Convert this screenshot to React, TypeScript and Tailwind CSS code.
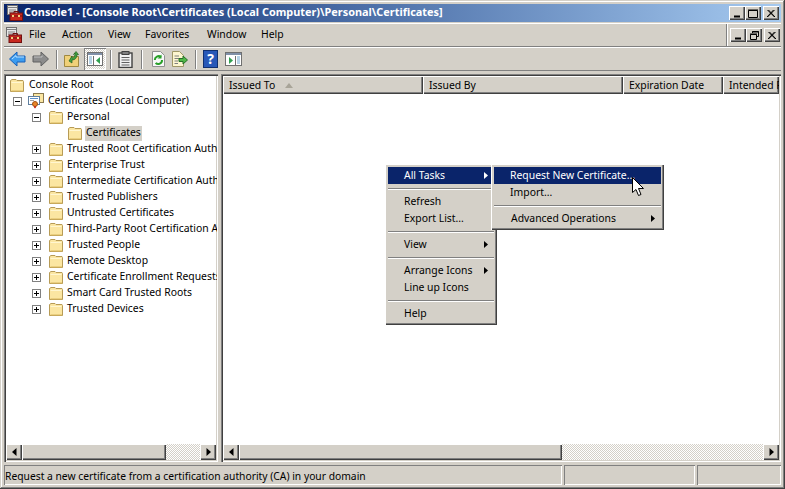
import React from 'react';

const font = { fontFamily: '"Noto Sans", Tahoma, sans-serif' };

const raised = 'shadow-[inset_1px_1px_0_#ffffff,inset_-1px_-1px_0_#404040,inset_-2px_-2px_0_#808080]';
const treeItems = [
  'Trusted Root Certification Authorities',
  'Enterprise Trust',
  'Intermediate Certification Authorities',
  'Trusted Publishers',
  'Untrusted Certificates',
  'Third-Party Root Certification Authorities',
  'Trusted People',
  'Remote Desktop',
  'Certificate Enrollment Requests',
  'Smart Card Trusted Roots',
  'Trusted Devices',
];

const menus = [
  { label: 'File', width: 'w-[33px]' },
  { label: 'Action', width: 'w-[46px]' },
  { label: 'View', width: 'w-[37px]' },
  { label: 'Favorites', width: 'w-[62px]' },
  { label: 'Window', width: 'w-[54px]' },
  { label: 'Help', width: 'w-[30px]' },
];

const Folder = ({ className = '' }: { className?: string }) => (
  <svg width="16" height="15" viewBox="0 0 16 15" className={`shrink-0 ${className}`}>
    <path d="M1.5 13.5V2.5L3 1.5H7L8 2.5H14L14.5 3.5V13.5Z" fill="#fbe6a2" stroke="#b79b56" />
    <path d="M2.5 4.5H13.5" stroke="#fff6d0" />
    <path d="M2.5 13H14" stroke="#d9b85f" />
  </svg>
);

const Expander = ({ open }: { open: boolean }) => (
  <svg width="9" height="9" viewBox="0 0 9 9" className="shrink-0">
    <rect x="0.5" y="0.5" width="8" height="8" fill="#fff" stroke="#808080" />
    <path d={open ? 'M2 4.5H7' : 'M2 4.5H7M4.5 2V7'} stroke="#000" />
  </svg>
);

const MmcIcon = () => (
  <svg width="16" height="16" viewBox="0 0 16 16" className="shrink-0">
    <rect x="0.5" y="0.5" width="10" height="9" fill="#e8e8e8" stroke="#707070" />
    <path d="M1 2.5H10M2 5H9M2 7H9" stroke="#808080" />
    <rect x="3" y="8" width="12.5" height="7.5" fill="#c8281e" stroke="#701010" />
    <path d="M3 11H15.5" stroke="#701010" />
    <rect x="5" y="10" width="2" height="2" fill="#f0d080" />
    <rect x="11" y="10" width="2" height="2" fill="#f0d080" />
    <path d="M7 8V6.5H11.5V8" fill="none" stroke="#701010" />
  </svg>
);

const CertIcon = () => (
  <svg width="16" height="16" viewBox="0 0 16 16" className="shrink-0">
    <rect x="5.5" y="0.5" width="10" height="9" fill="#fbe6a2" stroke="#8a7a50" />
    <rect x="0.5" y="3.5" width="11" height="8" fill="#fff" stroke="#5f7f9f" />
    <path d="M2 5.5H10" stroke="#5a8fc8" />
    <path d="M2 7.5H6" stroke="#a0a0a0" />
    <circle cx="7" cy="11" r="2.5" fill="#e8862a" stroke="#a05010" />
    <path d="M6 13V15.5L7 14.5L8 15.5V13" fill="#c03020" />
  </svg>
);

const Arrow = ({ dir, gray }: { dir: 'left' | 'right'; gray?: boolean }) => (
  <svg width="17" height="16" viewBox="0 0 17 16" className="shrink-0">
    <path
      d={dir === 'left' ? 'M0.5 8L8 1V5H16V11H8V15Z' : 'M16.5 8L9 1V5H1V11H9V15Z'}
      fill={gray ? '#8c8c8c' : '#3c9cf0'}
      stroke={gray ? '#606060' : '#1860b8'}
    />
    <path
      d={dir === 'left' ? 'M3 8L7 4.5V6H15' : 'M2 6H10V4.5'}
      fill="none"
      stroke={gray ? '#c0c0c0' : '#b8e0ff'}
    />
  </svg>
);

const Sep = () => <div className="w-[2px] h-[19px] border-l border-[#808080] bg-white shrink-0" />;

const ScrollButton = ({ dir }: { dir: 'left' | 'right' }) => (
  <div className={`w-4 h-[16px] bg-[#d4d0c8] ${raised} flex items-center justify-center shrink-0`}>
    <svg width="5" height="8" viewBox="0 0 5 8">
      <path d={dir === 'left' ? 'M4.5 0V8L0 4Z' : 'M0.5 0V8L5 4Z'} fill="#000" />
    </svg>
  </div>
);

const Scrollbar = ({ thumb }: { thumb: string }) => (
  <div className="h-[16px] flex shrink-0 bg-[repeating-conic-gradient(#d4d0c8_0_25%,#ffffff_0_50%)] bg-[length:2px_2px]">
    <ScrollButton dir="left" />
    <div className={`${thumb} h-[16px] bg-[#d4d0c8] ${raised}`} />
    <div className="flex-1" />
    <ScrollButton dir="right" />
  </div>
);

const WinButton = ({ children, className = '' }: { children: React.ReactNode; className?: string }) => (
  <div className={`w-4 h-[14px] bg-[#d4d0c8] ${raised} flex items-center justify-center ${className}`}>
    {children}
  </div>
);

const MinGlyph = () => (
  <svg width="8" height="9" viewBox="0 0 8 9"><path d="M1 7.5H7" stroke="#000" strokeWidth="2" /></svg>
);
const MaxGlyph = () => (
  <svg width="10" height="9" viewBox="0 0 10 9"><path d="M0.5 1.5H9.5V8.5H0.5Z" fill="none" stroke="#000" /><path d="M0 1H10" stroke="#000" /></svg>
);
const RestoreGlyph = () => (
  <svg width="9" height="9" viewBox="0 0 9 9">
    <path d="M2.5 2V0.5H8.5V5.5H7" fill="none" stroke="#000" />
    <path d="M0.5 3.5H6.5V8.5H0.5Z" fill="none" stroke="#000" />
    <path d="M2 1H9M0 3H7" stroke="#000" />
  </svg>
);
const CloseGlyph = () => (
  <svg width="8" height="7" viewBox="0 0 8 7"><path d="M0.5 0L7.5 7M7.5 0L0.5 7M1.5 0L8 7M6.5 0L0 7" stroke="#000" /></svg>
);

const MenuRow = ({ label, arrow, active, pad }: { label: string; arrow?: boolean; active?: boolean; pad: string }) => (
  <div className={`h-[17px] flex items-center justify-between ${pad} pr-[6px] ${active ? 'bg-[#0a246a] text-white' : 'text-black'}`}>
    <span className="whitespace-nowrap leading-none">{label}</span>
    {arrow && (
      <svg width="4" height="7" viewBox="0 0 4 7">
        <path d="M0 0L4 3.5L0 7Z" fill={active ? '#fff' : '#000'} />
      </svg>
    )}
  </div>
);

const MenuSep = () => (
  <div className="h-[9px] flex flex-col justify-center">
    <div className="h-[2px] border-t border-[#808080] bg-white" />
  </div>
);

const mainMenu = [
  ['All Tasks', 'arrow', 'active'],
  null,
  ['Refresh'],
  ['Export List...'],
  null,
  ['View', 'arrow'],
  null,
  ['Arrange Icons', 'arrow'],
  ['Line up Icons'],
  null,
  ['Help'],
];

const columns = [
  { label: 'Issued To', width: 'w-[200px]', sort: true },
  { label: 'Issued By', width: 'w-[200px]' },
  { label: 'Expiration Date', width: 'w-[100px]' },
  { label: 'Intended Purposes', width: 'flex-1' },
];

export default function App() {
  return (
    <div
      style={font}
      className="relative w-[785px] h-[489px] overflow-hidden bg-[#d4d0c8] text-[10.4px] text-black p-[4px] shadow-[inset_-1px_-1px_0_#404040,inset_1px_1px_0_#d4d0c8,inset_-2px_-2px_0_#808080,inset_2px_2px_0_#ffffff] flex flex-col"
    >
      {/* Title bar */}
      <div className="h-[18px] flex items-center pl-[3px] pr-[2px] bg-gradient-to-r from-[#0a246a] to-[#a6caf0] shrink-0">
        <MmcIcon />
        <span className="ml-[1px] text-white font-bold text-[10.9px] whitespace-nowrap flex-1 leading-none pb-[1px]">
          Console1 - [Console Root\Certificates (Local Computer)\Personal\Certificates]
        </span>
        <WinButton><MinGlyph /></WinButton>
        <WinButton><MaxGlyph /></WinButton>
        <WinButton className="ml-[2px]"><CloseGlyph /></WinButton>
      </div>

      {/* Menu bar */}
      <div className="mt-[1px] h-[24px] flex items-center border-t border-white border-b border-b-[#808080] shrink-0">
        <div className="ml-[2px]"><MmcIcon /></div>
        <div className="flex ml-[7px] pb-[2px]">
          {menus.map((m) => (
            <span key={m.label} className={`${m.width} leading-none`}>{m.label}</span>
          ))}
        </div>
        <div className="flex-1" />
        <div className="h-[22px] border-l border-[#808080] w-[2px] bg-white" />
        <div className="flex items-center ml-[2px] mr-[1px]">
          <WinButton><MinGlyph /></WinButton>
          <WinButton><RestoreGlyph /></WinButton>
          <WinButton className="ml-[2px]"><CloseGlyph /></WinButton>
        </div>
      </div>

      {/* Toolbar */}
      <div className="h-[24px] flex items-center border-t border-white border-b border-b-[#808080] shrink-0 pl-[5px]">
        <Arrow dir="left" />
        <div className="ml-[6px]"><Arrow dir="right" gray /></div>
        <div className="ml-[7px]"><Sep /></div>
        <svg width="16" height="16" viewBox="0 0 16 16" className="ml-[6px] shrink-0">
          <path d="M0.5 15.5V4.5H6L7 5.5H14.5V15.5Z" fill="#f0d078" stroke="#a08840" />
          <path d="M5 10L8 5V7C10 7 11 5 11 2L9.5 3.5L12 0.5L14.5 3.5H13C13 7 11 9 8 9V12Z" fill="#40a040" stroke="#206020" strokeWidth="0.7" />
        </svg>
        <div className="ml-[4px] w-[22px] h-[22px] bg-[repeating-conic-gradient(#d4d0c8_0_25%,#ffffff_0_50%)] bg-[length:2px_2px] shadow-[inset_1px_1px_0_#808080,inset_-1px_-1px_0_#ffffff] flex items-center justify-center shrink-0">
          <svg width="16" height="14" viewBox="0 0 16 14">
            <rect x="0.5" y="0.5" width="15" height="13" fill="#fff" stroke="#707070" />
            <path d="M1 2H15" stroke="#8090a8" strokeWidth="2" />
            <path d="M6.5 4V13" stroke="#707070" />
            <path d="M2 5H5M2 7H5M2 9H5M2 11H5" stroke="#70a8d0" />
            <path d="M13 5V12L9 8.5Z" fill="#30a050" />
          </svg>
        </div>
        <div className="ml-[4px]"><Sep /></div>
        <svg width="15" height="17" viewBox="0 0 15 17" className="ml-[6px] shrink-0">
          <rect x="1" y="2" width="13" height="14.5" fill="#f0f0f0" stroke="#404040" strokeWidth="1.4" />
          <rect x="4" y="0.5" width="7" height="3" fill="#808080" stroke="#404040" />
          <path d="M3.5 6.5H11.5M3.5 9H11.5M3.5 11.5H11.5M3.5 14H11.5" stroke="#606060" />
        </svg>
        <div className="ml-[8px]"><Sep /></div>
        <svg width="16" height="16" viewBox="0 0 16 16" className="ml-[7px] shrink-0">
          <path d="M2.5 0.5H10.5L14.5 4.5V15.5H2.5Z" fill="#f8f8f8" stroke="#909090" />
          <path d="M4.8 9A3.8 3.8 0 0 1 11 6M12 9A3.8 3.8 0 0 1 5.6 12" fill="none" stroke="#28a028" strokeWidth="2" />
          <path d="M11.5 3.5V7.5H7.5Z" fill="#28a028" />
        </svg>
        <svg width="17" height="16" viewBox="0 0 17 16" className="ml-[5px] shrink-0">
          <path d="M1.5 0.5H8.5L12.5 4.5V15.5H1.5Z" fill="#fdf6d0" stroke="#a09868" />
          <path d="M3.5 5H8M3.5 7.5H8M3.5 10H7M3.5 12.5H7" stroke="#808080" />
          <path d="M8 7.5H12V5L16.5 9L12 13V10.5H8Z" fill="#50b848" stroke="#287028" />
        </svg>
        <div className="ml-[7px]"><Sep /></div>
        <svg width="15" height="18" viewBox="0 0 15 18" className="ml-[6px] shrink-0">
          <rect x="0.5" y="0.5" width="14" height="17" fill="#2858b8" stroke="#103070" />
          <text x="7.5" y="14" fontSize="14" fontWeight="bold" textAnchor="middle" fill="#fff" style={font}>?</text>
        </svg>
        <svg width="17" height="14" viewBox="0 0 17 14" className="ml-[7px] shrink-0">
          <rect x="0.5" y="0.5" width="16" height="13" fill="#fff" stroke="#707070" />
          <path d="M1 2H16" stroke="#8090a8" strokeWidth="2" />
          <path d="M10.5 4V13" stroke="#707070" />
          <path d="M12 5H15M12 7H15M12 9H15M12 11H15" stroke="#70a8d0" />
          <path d="M4 5V12L8 8.5Z" fill="#30a050" />
        </svg>
      </div>

      {/* Panes */}
      <div className="flex-1 flex mt-[3px] min-h-0 gap-[4px]">
        <div className="w-[214px] bg-white flex flex-col shrink-0 shadow-[inset_1px_1px_0_#808080,inset_2px_2px_0_#404040,inset_-1px_-1px_0_#ffffff,inset_-2px_-2px_0_#d4d0c8] p-[2px]">
          <div className="flex-1 overflow-hidden pl-[3px] pt-[1px] min-h-0 -mr-[1px]">
            <div className="h-4 flex items-center">
              <Folder />
              <span className="ml-[4px] whitespace-nowrap pb-[1px]">Console Root</span>
            </div>
            <div className="h-4 flex items-center pl-[4px]">
              <Expander open />
              <div className="ml-[6px]"><CertIcon /></div>
              <span className="ml-[4px] whitespace-nowrap pb-[1px]">Certificates (Local Computer)</span>
            </div>
            <div className="h-4 flex items-center pl-[23px]">
              <Expander open />
              <Folder className="ml-[7px]" />
              <span className="ml-[3px] whitespace-nowrap pb-[1px]">Personal</span>
            </div>
            <div className="h-4 flex items-center pl-[58px]">
              <Folder />
              <span className="ml-[2px] px-[1px] bg-[#d4d0c8] h-[15px] flex items-center whitespace-nowrap pb-[1px]">Certificates</span>
            </div>
            {treeItems.map((t) => (
              <div key={t} className="h-4 flex items-center pl-[23px]">
                <Expander open={false} />
                <Folder className="ml-[7px]" />
                <span className="ml-[3px] whitespace-nowrap pb-[1px]">{t}</span>
              </div>
            ))}
          </div>
          <Scrollbar thumb="w-[144px]" />
        </div>

        <div className="flex-1 bg-white flex flex-col min-w-0 shadow-[inset_1px_1px_0_#808080,inset_2px_2px_0_#404040,inset_-1px_-1px_0_#ffffff,inset_-2px_-2px_0_#d4d0c8] p-[2px] -ml-[1px]">
          <div className="flex h-[18px] shrink-0 overflow-hidden">
            {columns.map((c) => (
              <div key={c.label} className={`${c.width} shrink-0 flex items-center pl-[6px] pt-[1px] bg-[#d4d0c8] ${raised} overflow-hidden whitespace-nowrap`}>
                <span>{c.label}</span>
                {c.sort && (
                  <svg width="8" height="5" viewBox="0 0 8 5" className="ml-[10px]">
                    <path d="M0 5L4 0L8 5Z" fill="#a8a498" />
                  </svg>
                )}
              </div>
            ))}
          </div>
          <div className="flex-1" />
          <Scrollbar thumb="w-[323px]" />
        </div>
      </div>

      {/* Status bar */}
      <div className="h-[20px] mt-[3px] flex gap-[2px] shrink-0">
        <div className="w-[558px] shadow-[inset_1px_1px_0_#808080,inset_-1px_-1px_0_#ffffff] flex items-center pl-[1px] pt-[3px] whitespace-nowrap overflow-hidden text-[10.3px]">
          Request a new certificate from a certification authority (CA) in your domain
        </div>
        <div className="w-[131px] shadow-[inset_1px_1px_0_#808080,inset_-1px_-1px_0_#ffffff]" />
        <div className="flex-1 shadow-[inset_1px_1px_0_#808080,inset_-1px_-1px_0_#ffffff]" />
      </div>

      {/* Context menu */}
      <div className={`absolute left-[385px] top-[164px] w-[112px] bg-[#d4d0c8] p-[3px] ${raised}`}>
        {mainMenu.map((m, i) =>
          m ? (
            <MenuRow key={i} label={m[0] as string} arrow={m[1] === 'arrow'} active={m[2] === 'active'} pad="pl-[16px]" />
          ) : (
            <MenuSep key={i} />
          ),
        )}
      </div>

      {/* All Tasks submenu */}
      <div className={`absolute left-[491px] top-[164px] w-[173px] bg-[#d4d0c8] p-[3px] ${raised}`}>
        <MenuRow label="Request New Certificate..." active pad="pl-[16px]" />
        <MenuRow label="Import..." pad="pl-[16px]" />
        <MenuSep />
        <MenuRow label="Advanced Operations" arrow pad="pl-[17px]" />
      </div>

      {/* Mouse pointer */}
      <svg width="13" height="20" viewBox="0 0 13 20" className="absolute left-[632px] top-[177px]">
        <path d="M0.5 0.5V15.5L4 12.5L6.5 18.5L9 17.5L6.5 11.5H11.5Z" fill="#fff" stroke="#000" />
      </svg>
    </div>
  );
}
